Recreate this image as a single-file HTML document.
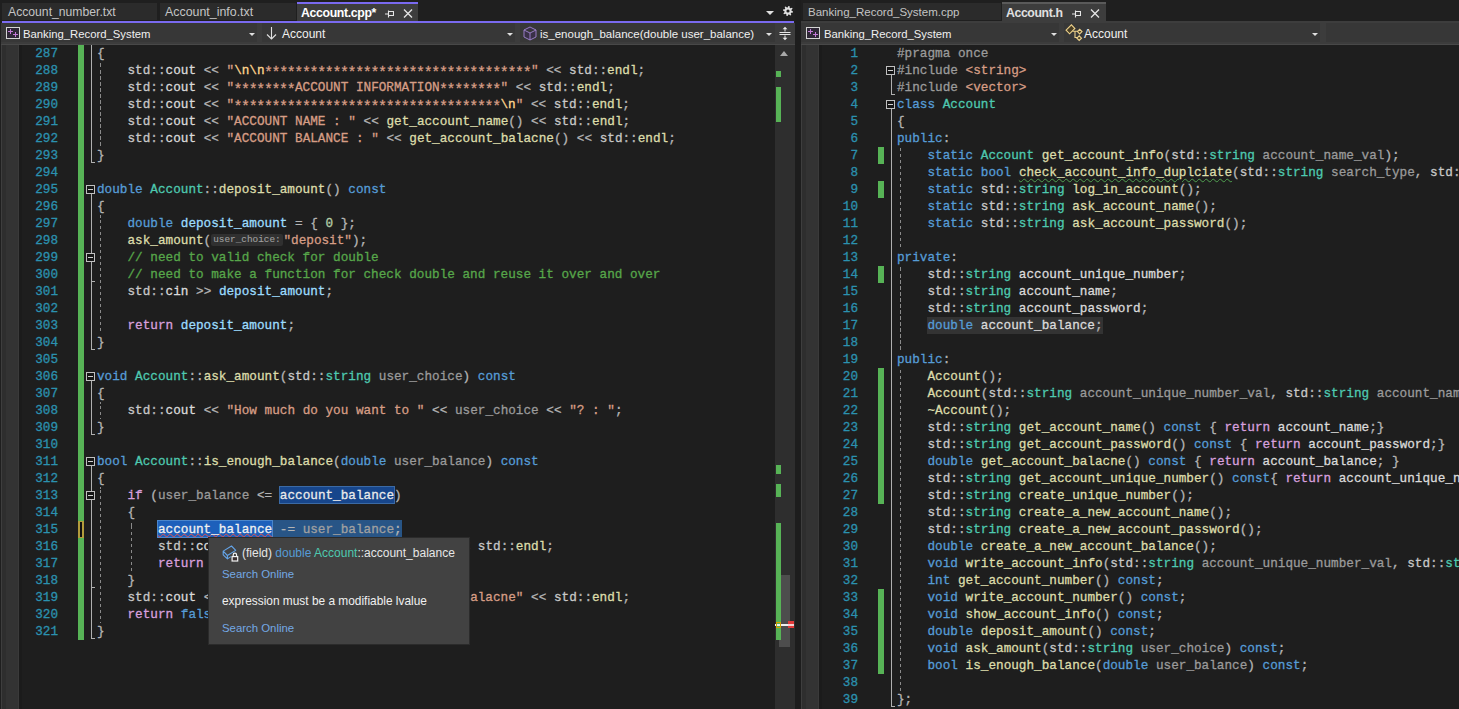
<!DOCTYPE html><html><head><meta charset="utf-8"><style>
*{margin:0;padding:0;box-sizing:border-box}
html,body{width:1459px;height:709px;overflow:hidden;background:#1f1f1f}
body{position:relative;font-family:"Liberation Sans",sans-serif}
.a{position:absolute}
.ln{position:absolute;height:17px;line-height:17px;white-space:pre;font-family:"Liberation Mono",monospace;font-size:12.7px;color:#dcdcdc;-webkit-text-stroke:0.3px currentColor}
.num{position:absolute;width:60px;text-align:right;height:17px;line-height:17px;font-family:"Liberation Mono",monospace;font-size:12.7px;color:#2b91af;-webkit-text-stroke:0.3px currentColor}
.k{color:#569cd6}.r{color:#d8a0df}.t{color:#4ec9b0}.f{color:#dcdcaa}.v{color:#9cdcfe}
.p{color:#9a9a9a}.m{color:#dadada}.n{color:#c8c8c8}.o{color:#b4b4b4}.s{color:#d69d85}
.e{color:#ffd68f}.c{color:#57a64a}.d{color:#b5cea8}.pp{color:#9b9b9b}.inc{color:#d69d85}
.hint{display:inline-block;vertical-align:top;margin-top:2px;height:12px;line-height:12px;width:72.2px;background:#303030;color:#a0a0a0;font-size:9.4px;border-radius:2px;padding-left:2px;overflow:hidden;-webkit-text-stroke:0.1px currentColor}
.sel1{color:#eaeaea}
.sel2{color:#f0f0f0;text-decoration:underline wavy #e05050;text-decoration-thickness:1px;text-underline-offset:0px}
.sel3{}.sel3o{color:#b4b4b4}.sel3p{color:#a0a0a0}
.ref{}.refk{color:#569cd6}.refm{color:#dadada}.refo{color:#b4b4b4}
.sq{color:#dcdcaa;text-decoration:underline wavy #4fa04f;text-decoration-thickness:1px;text-underline-offset:2px}
.ast{display:inline-block;width:7.6212px;text-align:center;font-size:15px;line-height:17px;vertical-align:top;position:relative;top:3px;left:-0.7px}
.tab{position:absolute;height:18px;font-size:12px;color:#c4c4c4;white-space:pre;line-height:18px}
.ui{position:absolute;font-size:12px;color:#f0f0f0;white-space:pre;line-height:14px}
.tri{position:absolute;width:0;height:0;border-left:3.5px solid transparent;border-right:3.5px solid transparent;border-top:3.5px solid #e0e0e0}
.green{position:absolute;background:#57b356;width:6px}
.guide2{background-image:repeating-linear-gradient(to bottom,#8a8a8a 0,#8a8a8a 3.5px,transparent 3.5px,transparent 6px)}
.ol{position:absolute;background:#b0b0b0;width:1px}
.box{position:absolute;width:9px;height:9px;border:1px solid #a5a5a5;background:#1e1e1e}
.box:after{content:"";position:absolute;left:1px;top:3px;width:5px;height:1px;background:#c8c8c8}
</style></head><body>
<div class="a" style="left:2px;top:3px;width:155px;height:17px;background:#2b2b2b"></div>
<div class="tab" style="left:8px;top:3px;font-size:12.2px">Account_number.txt</div>
<div class="a" style="left:160px;top:3px;width:136px;height:17px;background:#2b2b2b"></div>
<div class="tab" style="left:165px;top:3px;font-size:12.4px">Account_info.txt</div>
<div class="a" style="left:297px;top:2px;width:121px;height:19px;background:#3d3d3d;border-top:2px solid #7a6af0"></div>
<div class="tab" style="left:301px;top:3.5px;font-weight:bold;color:#ffffff;font-size:12.3px;letter-spacing:-0.35px">Account.cpp*</div>
<svg class="a" style="left:385px;top:10px" width="9" height="8" viewBox="0 0 9 8"><path d="M0 4H3M3.5 0.5V7.5M3.5 1.5H8.5V5.5H3.5" stroke="#e6e6e6" fill="none" stroke-width="1.1"/></svg>
<svg class="a" style="left:403px;top:9px" width="10" height="9" viewBox="0 0 10 9"><path d="M1 0.5L9 8.5M9 0.5L1 8.5" stroke="#e6e6e6" stroke-width="1.3"/></svg>
<div class="tri" style="left:766px;top:11px;border-left-width:4px;border-right-width:4px;border-top-width:4px"></div>
<svg class="a" style="left:783px;top:6px" width="10" height="10" viewBox="0 0 10 10"><path d="M5.51,-0.17 L6.51,0.02 L6.70,1.83 L7.28,2.22 L9.02,1.70 L9.59,2.55 L8.44,3.95 L8.58,4.65 L10.17,5.51 L9.98,6.51 L8.17,6.70 L7.78,7.28 L8.30,9.02 L7.45,9.59 L6.05,8.44 L5.35,8.58 L4.49,10.17 L3.49,9.98 L3.30,8.17 L2.72,7.78 L0.98,8.30 L0.41,7.45 L1.56,6.05 L1.42,5.35 L-0.17,4.49 L0.02,3.49 L1.83,3.30 L2.22,2.72 L1.70,0.98 L2.55,0.41 L3.95,1.56 L4.65,1.42Z" fill="#e0e0e0"/><circle cx="5" cy="5" r="1.6" fill="#1f1f1f"/></svg>
<div class="a" style="left:2px;top:21px;width:792px;height:2px;background:#7a6af0"></div>
<div class="a" style="left:1px;top:23px;width:794px;height:22px;background:#3c3c3c"></div>
<div class="a" style="left:1px;top:23px;width:256px;height:19px;background:#373737"></div>
<div class="a" style="left:262px;top:23px;width:253px;height:19px;background:#373737"></div>
<div class="a" style="left:520px;top:23px;width:255px;height:19px;background:#373737"></div>
<div class="a" style="left:1px;top:44px;width:794px;height:1px;background:#484848"></div>
<svg class="a" style="left:6px;top:27px" width="14" height="12" viewBox="0 0 14 12" shape-rendering="crispEdges"><rect x="0.5" y="0.5" width="13" height="11" fill="#2e2736" stroke="#d4d4d4"/><path d="M2 4.5H7M4.5 2V7M7 7.5H12M9.5 5V10" stroke="#c279d6" stroke-width="1"/></svg>
<div class="ui" style="left:23px;top:26.5px;font-size:11.3px">Banking_Record_System</div>
<div class="tri" style="left:249px;top:33px"></div>
<svg class="a" style="left:266px;top:27px" width="11" height="13" viewBox="0 0 11 13"><path d="M5.5 0V12M1 7.5L5.5 12L10 7.5" stroke="#e0e0e0" fill="none" stroke-width="1.1"/></svg>
<div class="ui" style="left:282px;top:26.5px">Account</div>
<div class="tri" style="left:507px;top:33px"></div>
<svg class="a" style="left:523px;top:26px" width="14" height="15" viewBox="0 0 14 15"><path d="M7 1L13 4V11L7 14L1 11V4Z M1 4L7 7L13 4 M7 7V14" stroke="#a384d4" fill="#3a3048" stroke-width="0.9"/></svg>
<div class="ui" style="left:540px;top:26.5px;font-size:11.5px">is_enough_balance(double user_balance)</div>
<div class="tri" style="left:766px;top:33px"></div>
<svg class="a" style="left:779px;top:26px" width="12" height="15" viewBox="0 0 12 15"><path d="M0.5 6.5H11.5M0.5 8.5H11.5M6 2.5V5.5M6 9.5V12.5" stroke="#e8e8e8" fill="none" stroke-width="1"/><path d="M6 0.8L3.6 3.2H8.4Z M6 14.2L3.6 11.8H8.4Z" fill="#e8e8e8"/></svg>
<div class="a" style="left:1px;top:45px;width:18px;height:664px;background:#333333"></div><div class="a" style="left:1px;top:45px;width:1px;height:664px;background:#3e3e3e"></div><div class="a" style="left:2px;top:45px;width:4px;height:664px;background:#2e2e2e"></div><div class="a" style="left:18px;top:45px;width:1px;height:664px;background:#3a3a3a"></div><div class="a" style="left:19px;top:45px;width:3px;height:664px;background:#1b1b1b"></div>
<div class="a" style="left:22px;top:45px;width:753px;height:664px;background:#1e1e1e"></div>
<div class="num" style="top:45px;left:-2px">287</div>
<div class="num" style="top:62px;left:-2px">288</div>
<div class="num" style="top:79px;left:-2px">289</div>
<div class="num" style="top:96px;left:-2px">290</div>
<div class="num" style="top:113px;left:-2px">291</div>
<div class="num" style="top:130px;left:-2px">292</div>
<div class="num" style="top:147px;left:-2px">293</div>
<div class="num" style="top:164px;left:-2px">294</div>
<div class="num" style="top:181px;left:-2px">295</div>
<div class="num" style="top:198px;left:-2px">296</div>
<div class="num" style="top:215px;left:-2px">297</div>
<div class="num" style="top:232px;left:-2px">298</div>
<div class="num" style="top:249px;left:-2px">299</div>
<div class="num" style="top:266px;left:-2px">300</div>
<div class="num" style="top:283px;left:-2px">301</div>
<div class="num" style="top:300px;left:-2px">302</div>
<div class="num" style="top:317px;left:-2px">303</div>
<div class="num" style="top:334px;left:-2px">304</div>
<div class="num" style="top:351px;left:-2px">305</div>
<div class="num" style="top:368px;left:-2px">306</div>
<div class="num" style="top:385px;left:-2px">307</div>
<div class="num" style="top:402px;left:-2px">308</div>
<div class="num" style="top:419px;left:-2px">309</div>
<div class="num" style="top:436px;left:-2px">310</div>
<div class="num" style="top:453px;left:-2px">311</div>
<div class="num" style="top:470px;left:-2px">312</div>
<div class="num" style="top:487px;left:-2px">313</div>
<div class="num" style="top:504px;left:-2px">314</div>
<div class="num" style="top:521px;left:-2px">315</div>
<div class="num" style="top:538px;left:-2px">316</div>
<div class="num" style="top:555px;left:-2px">317</div>
<div class="num" style="top:572px;left:-2px">318</div>
<div class="num" style="top:589px;left:-2px">319</div>
<div class="num" style="top:606px;left:-2px">320</div>
<div class="num" style="top:623px;left:-2px">321</div>
<div class="green" style="left:78px;top:45px;height:595px"></div>
<div class="a" style="left:78px;top:521px;width:6px;height:17px;background:#121212;border:1px solid #b39c3c;border-left-width:2px;border-right-width:2px"></div>
<div class="ol" style="left:91px;top:45px;height:118px"></div>
<div class="ol" style="left:91px;top:162px;width:4px;height:1px"></div>
<div class="a" style="left:86px;top:185px;width:9px;height:9px;border:1px solid #c0c0c0;background:#161616"></div><div class="a" style="left:88px;top:189px;width:5px;height:1px;background:#d0d0d0"></div>
<div class="ol" style="left:91px;top:194px;height:156px"></div>
<div class="ol" style="left:91px;top:349px;width:4px;height:1px"></div>
<div class="a" style="left:86px;top:253px;width:9px;height:9px;border:1px solid #c0c0c0;background:#161616"></div><div class="a" style="left:88px;top:257px;width:5px;height:1px;background:#d0d0d0"></div>
<div class="ol" style="left:91px;top:262px;height:20px"></div>
<div class="ol" style="left:91px;top:281px;width:4px;height:1px"></div>
<div class="a" style="left:86px;top:372px;width:9px;height:9px;border:1px solid #c0c0c0;background:#161616"></div><div class="a" style="left:88px;top:376px;width:5px;height:1px;background:#d0d0d0"></div>
<div class="ol" style="left:91px;top:381px;height:54px"></div>
<div class="ol" style="left:91px;top:434px;width:4px;height:1px"></div>
<div class="a" style="left:86px;top:457px;width:9px;height:9px;border:1px solid #c0c0c0;background:#161616"></div><div class="a" style="left:88px;top:461px;width:5px;height:1px;background:#d0d0d0"></div>
<div class="ol" style="left:91px;top:466px;height:173px"></div>
<div class="ol" style="left:91px;top:638px;width:4px;height:1px"></div>
<div class="a" style="left:86px;top:491px;width:9px;height:9px;border:1px solid #c0c0c0;background:#161616"></div><div class="a" style="left:88px;top:495px;width:5px;height:1px;background:#d0d0d0"></div>
<div class="ol" style="left:91px;top:500px;height:88px"></div>
<div class="ol" style="left:91px;top:587px;width:4px;height:1px"></div>
<div class="a guide2" style="left:100px;top:62px;width:1px;height:85px;background-position:0 2px"></div>
<div class="a guide2" style="left:100px;top:215px;width:1px;height:119px;background-position:0 5px"></div>
<div class="a guide2" style="left:100px;top:402px;width:1px;height:17px;background-position:0 4px"></div>
<div class="a guide2" style="left:100px;top:487px;width:1px;height:136px;background-position:0 3px"></div>
<div class="a guide2" style="left:131px;top:521px;width:1px;height:51px;background-position:0 5px"></div>
<div class="a" style="left:279px;top:486px;width:116px;height:18px;background:#17468c;border:1px solid #3b6aa5"></div>
<div class="a" style="left:273px;top:520px;width:129px;height:18px;background:#285586"></div>
<div class="a" style="left:157px;top:520px;width:116px;height:18px;background:#1d60bb;border:1px solid #4a86cc"></div>
<div class="ln" style="top:45px;left:97px"><span class="o">{</span></div>
<div class="ln" style="top:62px;left:97px">    <span class="n">std</span><span class="o">::</span><span class="m">cout</span> <span class="o">&lt;&lt;</span> <span class="s">&quot;</span><span class="e">\n\n</span><span class="s"><span class="ast">*</span><span class="ast">*</span><span class="ast">*</span><span class="ast">*</span><span class="ast">*</span><span class="ast">*</span><span class="ast">*</span><span class="ast">*</span><span class="ast">*</span><span class="ast">*</span><span class="ast">*</span><span class="ast">*</span><span class="ast">*</span><span class="ast">*</span><span class="ast">*</span><span class="ast">*</span><span class="ast">*</span><span class="ast">*</span><span class="ast">*</span><span class="ast">*</span><span class="ast">*</span><span class="ast">*</span><span class="ast">*</span><span class="ast">*</span><span class="ast">*</span><span class="ast">*</span><span class="ast">*</span><span class="ast">*</span><span class="ast">*</span><span class="ast">*</span><span class="ast">*</span><span class="ast">*</span><span class="ast">*</span><span class="ast">*</span><span class="ast">*</span>&quot;</span> <span class="o">&lt;&lt;</span> <span class="n">std</span><span class="o">::</span><span class="f">endl</span><span class="o">;</span></div>
<div class="ln" style="top:79px;left:97px">    <span class="n">std</span><span class="o">::</span><span class="m">cout</span> <span class="o">&lt;&lt;</span> <span class="s">&quot;<span class="ast">*</span><span class="ast">*</span><span class="ast">*</span><span class="ast">*</span><span class="ast">*</span><span class="ast">*</span><span class="ast">*</span><span class="ast">*</span>ACCOUNT INFORMATION<span class="ast">*</span><span class="ast">*</span><span class="ast">*</span><span class="ast">*</span><span class="ast">*</span><span class="ast">*</span><span class="ast">*</span><span class="ast">*</span>&quot;</span> <span class="o">&lt;&lt;</span> <span class="n">std</span><span class="o">::</span><span class="f">endl</span><span class="o">;</span></div>
<div class="ln" style="top:96px;left:97px">    <span class="n">std</span><span class="o">::</span><span class="m">cout</span> <span class="o">&lt;&lt;</span> <span class="s">&quot;<span class="ast">*</span><span class="ast">*</span><span class="ast">*</span><span class="ast">*</span><span class="ast">*</span><span class="ast">*</span><span class="ast">*</span><span class="ast">*</span><span class="ast">*</span><span class="ast">*</span><span class="ast">*</span><span class="ast">*</span><span class="ast">*</span><span class="ast">*</span><span class="ast">*</span><span class="ast">*</span><span class="ast">*</span><span class="ast">*</span><span class="ast">*</span><span class="ast">*</span><span class="ast">*</span><span class="ast">*</span><span class="ast">*</span><span class="ast">*</span><span class="ast">*</span><span class="ast">*</span><span class="ast">*</span><span class="ast">*</span><span class="ast">*</span><span class="ast">*</span><span class="ast">*</span><span class="ast">*</span><span class="ast">*</span><span class="ast">*</span><span class="ast">*</span></span><span class="e">\n</span><span class="s">&quot;</span> <span class="o">&lt;&lt;</span> <span class="n">std</span><span class="o">::</span><span class="f">endl</span><span class="o">;</span></div>
<div class="ln" style="top:113px;left:97px">    <span class="n">std</span><span class="o">::</span><span class="m">cout</span> <span class="o">&lt;&lt;</span> <span class="s">&quot;ACCOUNT NAME : &quot;</span> <span class="o">&lt;&lt;</span> <span class="f">get_account_name</span><span class="o">()</span> <span class="o">&lt;&lt;</span> <span class="n">std</span><span class="o">::</span><span class="f">endl</span><span class="o">;</span></div>
<div class="ln" style="top:130px;left:97px">    <span class="n">std</span><span class="o">::</span><span class="m">cout</span> <span class="o">&lt;&lt;</span> <span class="s">&quot;ACCOUNT BALANCE : &quot;</span> <span class="o">&lt;&lt;</span> <span class="f">get_account_balacne</span><span class="o">()</span> <span class="o">&lt;&lt;</span> <span class="n">std</span><span class="o">::</span><span class="f">endl</span><span class="o">;</span></div>
<div class="ln" style="top:147px;left:97px"><span class="o">}</span></div>
<div class="ln" style="top:164px;left:97px"></div>
<div class="ln" style="top:181px;left:97px"><span class="k">double</span> <span class="t">Account</span><span class="o">::</span><span class="f">deposit_amount</span><span class="o">()</span> <span class="k">const</span></div>
<div class="ln" style="top:198px;left:97px"><span class="o">{</span></div>
<div class="ln" style="top:215px;left:97px">    <span class="k">double</span> <span class="v">deposit_amount</span> <span class="o">=</span> <span class="o">{</span> <span class="d">0</span> <span class="o">};</span></div>
<div class="ln" style="top:232px;left:97px">    <span class="f">ask_amount</span><span class="o">(</span><span class="hint">user_choice:</span><span class="s">&quot;deposit&quot;</span><span class="o">);</span></div>
<div class="ln" style="top:249px;left:97px">    <span class="c">// need to valid check for double</span></div>
<div class="ln" style="top:266px;left:97px">    <span class="c">// need to make a function for check double and reuse it over and over</span></div>
<div class="ln" style="top:283px;left:97px">    <span class="n">std</span><span class="o">::</span><span class="m">cin</span> <span class="o">&gt;&gt;</span> <span class="v">deposit_amount</span><span class="o">;</span></div>
<div class="ln" style="top:300px;left:97px"></div>
<div class="ln" style="top:317px;left:97px">    <span class="r">return</span> <span class="v">deposit_amount</span><span class="o">;</span></div>
<div class="ln" style="top:334px;left:97px"><span class="o">}</span></div>
<div class="ln" style="top:351px;left:97px"></div>
<div class="ln" style="top:368px;left:97px"><span class="k">void</span> <span class="t">Account</span><span class="o">::</span><span class="f">ask_amount</span><span class="o">(</span><span class="n">std</span><span class="o">::</span><span class="t">string</span> <span class="p">user_choice</span><span class="o">)</span> <span class="k">const</span></div>
<div class="ln" style="top:385px;left:97px"><span class="o">{</span></div>
<div class="ln" style="top:402px;left:97px">    <span class="n">std</span><span class="o">::</span><span class="m">cout</span> <span class="o">&lt;&lt;</span> <span class="s">&quot;How much do you want to &quot;</span> <span class="o">&lt;&lt;</span> <span class="p">user_choice</span> <span class="o">&lt;&lt;</span> <span class="s">&quot;? : &quot;</span><span class="o">;</span></div>
<div class="ln" style="top:419px;left:97px"><span class="o">}</span></div>
<div class="ln" style="top:436px;left:97px"></div>
<div class="ln" style="top:453px;left:97px"><span class="k">bool</span> <span class="t">Account</span><span class="o">::</span><span class="f">is_enough_balance</span><span class="o">(</span><span class="k">double</span> <span class="p">user_balance</span><span class="o">)</span> <span class="k">const</span></div>
<div class="ln" style="top:470px;left:97px"><span class="o">{</span></div>
<div class="ln" style="top:487px;left:97px">    <span class="r">if</span> <span class="o">(</span><span class="p">user_balance</span> <span class="o">&lt;=</span> <span class="sel1">account_balance</span><span class="o">)</span></div>
<div class="ln" style="top:504px;left:97px">    <span class="o">{</span></div>
<div class="ln" style="top:521px;left:97px">        <span class="sel2">account_balance</span><span class="sel3"> </span><span class="sel3o">-=</span><span class="sel3"> </span><span class="sel3p">user_balance</span><span class="sel3o">;</span></div>
<div class="ln" style="top:538px;left:97px">        <span class="n">std</span><span class="o">::</span><span class="m">cout</span> <span class="o">&lt;&lt;</span> <span class="s">&quot;balance is enough now!!&quot;</span> <span class="o">&lt;&lt;</span> <span class="n">std</span><span class="o">::</span><span class="f">endl</span><span class="o">;</span></div>
<div class="ln" style="top:555px;left:97px">        <span class="r">return</span> <span class="k">true</span><span class="o">;</span></div>
<div class="ln" style="top:572px;left:97px">    <span class="o">}</span></div>
<div class="ln" style="top:589px;left:97px">    <span class="n">std</span><span class="o">::</span><span class="m">cout</span> <span class="o">&lt;&lt;</span> <span class="s">&quot;You don&#x27;t have enough account balacne&quot;</span> <span class="o">&lt;&lt;</span> <span class="n">std</span><span class="o">::</span><span class="f">endl</span><span class="o">;</span></div>
<div class="ln" style="top:606px;left:97px">    <span class="r">return</span> <span class="k">false</span><span class="o">;</span></div>
<div class="ln" style="top:623px;left:97px"><span class="o">}</span></div>
<div class="a" style="left:775px;top:45px;width:20px;height:664px;background:#2e2e2e"></div>
<div class="tri" style="left:780px;top:51px;border-left:4.5px solid transparent;border-right:4.5px solid transparent;border-top:0;border-bottom:5px solid #a8a8a8"></div>
<div class="a" style="left:779px;top:575px;width:11px;height:72px;background:#4d4d4d"></div>
<div class="a" style="left:776px;top:71px;width:5px;height:6px;background:#57b356"></div>
<div class="a" style="left:776px;top:87px;width:5px;height:35px;background:#57b356"></div>
<div class="a" style="left:776px;top:465px;width:5px;height:9px;background:#57b356"></div>
<div class="a" style="left:776px;top:484px;width:5px;height:13px;background:#57b356"></div>
<div class="a" style="left:776px;top:523px;width:5px;height:117px;background:#57b356"></div>
<div class="a" style="left:775px;top:624px;width:19px;height:2px;background:#f0f0f0"></div>
<div class="a" style="left:776px;top:622px;width:5px;height:6px;border:1px solid #d0a000"></div>
<div class="a" style="left:788px;top:621px;width:6px;height:7px;background:#e03a3a"></div>
<div class="a" style="left:788px;top:624px;width:6px;height:2px;background:#f4d0d0"></div>
<div class="a" style="left:795px;top:0px;width:6px;height:709px;background:#1d1d1d"></div>
<div class="a" style="left:803px;top:3px;width:198px;height:17px;background:#2b2b2b"></div>
<div class="tab" style="left:808px;top:3px;font-size:11.5px">Banking_Record_System.cpp</div>
<div class="a" style="left:1002px;top:2px;width:104px;height:21px;background:#3d3d3d;border-top:2px solid #5a5a5a"></div>
<div class="tab" style="left:1006px;top:3.5px;font-weight:bold;color:#e0e0e0;font-size:12.3px;letter-spacing:-0.4px">Account.h</div>
<svg class="a" style="left:1072px;top:10px" width="9" height="8" viewBox="0 0 9 8"><path d="M0 4H3M3.5 0.5V7.5M3.5 1.5H8.5V5.5H3.5" stroke="#e6e6e6" fill="none" stroke-width="1.1"/></svg>
<svg class="a" style="left:1090px;top:9px" width="10" height="9" viewBox="0 0 10 9"><path d="M1 0.5L9 8.5M9 0.5L1 8.5" stroke="#e6e6e6" stroke-width="1.3"/></svg>
<div class="a" style="left:801px;top:21px;width:658px;height:2px;background:#3d3d3d"></div>
<div class="a" style="left:801px;top:23px;width:658px;height:22px;background:#3c3c3c"></div>
<div class="a" style="left:801px;top:23px;width:258px;height:19px;background:#373737"></div>
<div class="a" style="left:1064px;top:23px;width:256px;height:19px;background:#373737"></div>
<div class="a" style="left:1326px;top:23px;width:133px;height:19px;background:#373737"></div>
<div class="a" style="left:801px;top:44px;width:658px;height:1px;background:#484848"></div>
<svg class="a" style="left:806px;top:27px" width="14" height="12" viewBox="0 0 14 12" shape-rendering="crispEdges"><rect x="0.5" y="0.5" width="13" height="11" fill="#2e2736" stroke="#d4d4d4"/><path d="M2 4.5H7M4.5 2V7M7 7.5H12M9.5 5V10" stroke="#c279d6" stroke-width="1"/></svg>
<div class="ui" style="left:824px;top:26.5px;font-size:11.3px">Banking_Record_System</div>
<div class="tri" style="left:1051px;top:33px"></div>
<svg class="a" style="left:1065px;top:24px" width="18" height="18" viewBox="0 0 18 18"><g stroke="#ecd08a" fill="#4a3f25" stroke-width="1.1"><path d="M1.1 6.2L6.4 0.9L9.9 4.5L4.6 9.8Z"/><path d="M12.4 7.6L14.7 5.3L17 7.6L14.7 9.9Z"/><path d="M11.9 14.2L14.2 11.9L16.5 14.2L14.2 16.5Z"/><path d="M7.5 7.2H13.2M10 7.2V13.5H12.5" fill="none"/></g></svg>
<div class="ui" style="left:1084px;top:26.5px">Account</div>
<div class="tri" style="left:1312px;top:33px"></div>
<div class="a" style="left:801px;top:45px;width:18px;height:664px;background:#333333"></div><div class="a" style="left:801px;top:45px;width:1px;height:664px;background:#3e3e3e"></div><div class="a" style="left:802px;top:45px;width:4px;height:664px;background:#2e2e2e"></div><div class="a" style="left:818px;top:45px;width:1px;height:664px;background:#3a3a3a"></div><div class="a" style="left:819px;top:45px;width:3px;height:664px;background:#1b1b1b"></div>
<div class="a" style="left:822px;top:45px;width:637px;height:664px;background:#1e1e1e"></div>
<div class="num" style="top:45px;left:798px">1</div>
<div class="num" style="top:62px;left:798px">2</div>
<div class="num" style="top:79px;left:798px">3</div>
<div class="num" style="top:96px;left:798px">4</div>
<div class="num" style="top:113px;left:798px">5</div>
<div class="num" style="top:130px;left:798px">6</div>
<div class="num" style="top:147px;left:798px">7</div>
<div class="num" style="top:164px;left:798px">8</div>
<div class="num" style="top:181px;left:798px">9</div>
<div class="num" style="top:198px;left:798px">10</div>
<div class="num" style="top:215px;left:798px">11</div>
<div class="num" style="top:232px;left:798px">12</div>
<div class="num" style="top:249px;left:798px">13</div>
<div class="num" style="top:266px;left:798px">14</div>
<div class="num" style="top:283px;left:798px">15</div>
<div class="num" style="top:300px;left:798px">16</div>
<div class="num" style="top:317px;left:798px">17</div>
<div class="num" style="top:334px;left:798px">18</div>
<div class="num" style="top:351px;left:798px">19</div>
<div class="num" style="top:368px;left:798px">20</div>
<div class="num" style="top:385px;left:798px">21</div>
<div class="num" style="top:402px;left:798px">22</div>
<div class="num" style="top:419px;left:798px">23</div>
<div class="num" style="top:436px;left:798px">24</div>
<div class="num" style="top:453px;left:798px">25</div>
<div class="num" style="top:470px;left:798px">26</div>
<div class="num" style="top:487px;left:798px">27</div>
<div class="num" style="top:504px;left:798px">28</div>
<div class="num" style="top:521px;left:798px">29</div>
<div class="num" style="top:538px;left:798px">30</div>
<div class="num" style="top:555px;left:798px">31</div>
<div class="num" style="top:572px;left:798px">32</div>
<div class="num" style="top:589px;left:798px">33</div>
<div class="num" style="top:606px;left:798px">34</div>
<div class="num" style="top:623px;left:798px">35</div>
<div class="num" style="top:640px;left:798px">36</div>
<div class="num" style="top:657px;left:798px">37</div>
<div class="num" style="top:674px;left:798px">38</div>
<div class="num" style="top:691px;left:798px">39</div>
<div class="green" style="left:878px;top:147px;height:17px"></div>
<div class="green" style="left:878px;top:181px;height:17px"></div>
<div class="green" style="left:878px;top:266px;height:17px"></div>
<div class="green" style="left:878px;top:368px;height:136px"></div>
<div class="green" style="left:878px;top:589px;height:85px"></div>
<div class="a" style="left:886px;top:66px;width:9px;height:9px;border:1px solid #c0c0c0;background:#161616"></div><div class="a" style="left:888px;top:70px;width:5px;height:1px;background:#d0d0d0"></div>
<div class="ol" style="left:891px;top:75px;height:20px"></div>
<div class="ol" style="left:891px;top:94px;width:4px;height:1px"></div>
<div class="a" style="left:886px;top:100px;width:9px;height:9px;border:1px solid #c0c0c0;background:#161616"></div><div class="a" style="left:888px;top:104px;width:5px;height:1px;background:#d0d0d0"></div>
<div class="ol" style="left:891px;top:109px;height:598px"></div>
<div class="ol" style="left:891px;top:706px;width:4px;height:1px"></div>
<div class="a guide2" style="left:900px;top:147px;width:1px;height:102px;background-position:0 1px"></div>
<div class="a guide2" style="left:900px;top:266px;width:1px;height:85px;background-position:0 2px"></div>
<div class="a guide2" style="left:900px;top:368px;width:1px;height:323px;background-position:0 2px"></div>
<div class="a" style="left:927px;top:317px;width:176px;height:17px;background:#333333"></div>
<div class="ln" style="top:45px;left:897px"><span class="pp">#pragma once</span></div>
<div class="ln" style="top:62px;left:897px"><span class="pp">#include</span> <span class="inc">&lt;string&gt;</span></div>
<div class="ln" style="top:79px;left:897px"><span class="pp">#include</span> <span class="inc">&lt;vector&gt;</span></div>
<div class="ln" style="top:96px;left:897px"><span class="k">class</span> <span class="t">Account</span></div>
<div class="ln" style="top:113px;left:897px"><span class="o">{</span></div>
<div class="ln" style="top:130px;left:897px"><span class="k">public</span><span class="o">:</span></div>
<div class="ln" style="top:147px;left:897px">    <span class="k">static</span> <span class="t">Account</span> <span class="f">get_account_info</span><span class="o">(</span><span class="n">std</span><span class="o">::</span><span class="t">string</span> <span class="p">account_name_val</span><span class="o">);</span></div>
<div class="ln" style="top:164px;left:897px">    <span class="k">static</span> <span class="k">bool</span> <span class="sq">check_account_info_duplciate</span><span class="o">(</span><span class="n">std</span><span class="o">::</span><span class="t">string</span> <span class="p">search_type</span><span class="o">,</span> <span class="n">std</span><span class="o">::</span><span class="t">string</span> <span class="p">search_value</span><span class="o">);</span></div>
<div class="ln" style="top:181px;left:897px">    <span class="k">static</span> <span class="n">std</span><span class="o">::</span><span class="t">string</span> <span class="f">log_in_account</span><span class="o">();</span></div>
<div class="ln" style="top:198px;left:897px">    <span class="k">static</span> <span class="n">std</span><span class="o">::</span><span class="t">string</span> <span class="f">ask_account_name</span><span class="o">();</span></div>
<div class="ln" style="top:215px;left:897px">    <span class="k">static</span> <span class="n">std</span><span class="o">::</span><span class="t">string</span> <span class="f">ask_account_password</span><span class="o">();</span></div>
<div class="ln" style="top:232px;left:897px"></div>
<div class="ln" style="top:249px;left:897px"><span class="k">private</span><span class="o">:</span></div>
<div class="ln" style="top:266px;left:897px">    <span class="n">std</span><span class="o">::</span><span class="t">string</span> <span class="m">account_unique_number</span><span class="o">;</span></div>
<div class="ln" style="top:283px;left:897px">    <span class="n">std</span><span class="o">::</span><span class="t">string</span> <span class="m">account_name</span><span class="o">;</span></div>
<div class="ln" style="top:300px;left:897px">    <span class="n">std</span><span class="o">::</span><span class="t">string</span> <span class="m">account_password</span><span class="o">;</span></div>
<div class="ln" style="top:317px;left:897px">    <span class="refk">double</span><span class="ref"> </span><span class="refm">account_balance</span><span class="refo">;</span></div>
<div class="ln" style="top:334px;left:897px"></div>
<div class="ln" style="top:351px;left:897px"><span class="k">public</span><span class="o">:</span></div>
<div class="ln" style="top:368px;left:897px">    <span class="f">Account</span><span class="o">();</span></div>
<div class="ln" style="top:385px;left:897px">    <span class="f">Account</span><span class="o">(</span><span class="n">std</span><span class="o">::</span><span class="t">string</span> <span class="p">account_unique_number_val</span><span class="o">,</span> <span class="n">std</span><span class="o">::</span><span class="t">string</span> <span class="p">account_name_val</span><span class="o">);</span></div>
<div class="ln" style="top:402px;left:897px">    <span class="f">~Account</span><span class="o">();</span></div>
<div class="ln" style="top:419px;left:897px">    <span class="n">std</span><span class="o">::</span><span class="t">string</span> <span class="f">get_account_name</span><span class="o">()</span> <span class="k">const</span> <span class="o">{</span> <span class="r">return</span> <span class="m">account_name</span><span class="o">;}</span></div>
<div class="ln" style="top:436px;left:897px">    <span class="n">std</span><span class="o">::</span><span class="t">string</span> <span class="f">get_account_password</span><span class="o">()</span> <span class="k">const</span> <span class="o">{</span> <span class="r">return</span> <span class="m">account_password</span><span class="o">;}</span></div>
<div class="ln" style="top:453px;left:897px">    <span class="k">double</span> <span class="f">get_account_balacne</span><span class="o">()</span> <span class="k">const</span> <span class="o">{</span> <span class="r">return</span> <span class="m">account_balance</span><span class="o">; }</span></div>
<div class="ln" style="top:470px;left:897px">    <span class="n">std</span><span class="o">::</span><span class="t">string</span> <span class="f">get_account_unique_number</span><span class="o">()</span> <span class="k">const</span><span class="o">{</span> <span class="r">return</span> <span class="m">account_unique_number</span><span class="o">; }</span></div>
<div class="ln" style="top:487px;left:897px">    <span class="n">std</span><span class="o">::</span><span class="t">string</span> <span class="f">create_unique_number</span><span class="o">();</span></div>
<div class="ln" style="top:504px;left:897px">    <span class="n">std</span><span class="o">::</span><span class="t">string</span> <span class="f">create_a_new_account_name</span><span class="o">();</span></div>
<div class="ln" style="top:521px;left:897px">    <span class="n">std</span><span class="o">::</span><span class="t">string</span> <span class="f">create_a_new_account_password</span><span class="o">();</span></div>
<div class="ln" style="top:538px;left:897px">    <span class="k">double</span> <span class="f">create_a_new_account_balance</span><span class="o">();</span></div>
<div class="ln" style="top:555px;left:897px">    <span class="k">void</span> <span class="f">write_account_info</span><span class="o">(</span><span class="n">std</span><span class="o">::</span><span class="t">string</span> <span class="p">account_unique_number_val</span><span class="o">,</span> <span class="n">std</span><span class="o">::</span><span class="t">string</span> <span class="p">account_name_val</span><span class="o">);</span></div>
<div class="ln" style="top:572px;left:897px">    <span class="k">int</span> <span class="f">get_account_number</span><span class="o">()</span> <span class="k">const</span><span class="o">;</span></div>
<div class="ln" style="top:589px;left:897px">    <span class="k">void</span> <span class="f">write_account_number</span><span class="o">()</span> <span class="k">const</span><span class="o">;</span></div>
<div class="ln" style="top:606px;left:897px">    <span class="k">void</span> <span class="f">show_account_info</span><span class="o">()</span> <span class="k">const</span><span class="o">;</span></div>
<div class="ln" style="top:623px;left:897px">    <span class="k">double</span> <span class="f">deposit_amount</span><span class="o">()</span> <span class="k">const</span><span class="o">;</span></div>
<div class="ln" style="top:640px;left:897px">    <span class="k">void</span> <span class="f">ask_amount</span><span class="o">(</span><span class="n">std</span><span class="o">::</span><span class="t">string</span> <span class="p">user_choice</span><span class="o">)</span> <span class="k">const</span><span class="o">;</span></div>
<div class="ln" style="top:657px;left:897px">    <span class="k">bool</span> <span class="f">is_enough_balance</span><span class="o">(</span><span class="k">double</span> <span class="p">user_balance</span><span class="o">)</span> <span class="k">const</span><span class="o">;</span></div>
<div class="ln" style="top:674px;left:897px"></div>
<div class="ln" style="top:691px;left:897px"><span class="o">};</span></div>
<div class="a" style="left:208px;top:537px;width:262px;height:108px;background:#2b2b2b"></div><div class="a" style="left:209px;top:538px;width:260px;height:106px;background:#424242"></div><svg class="a" style="left:222px;top:545px" width="17" height="17" viewBox="0 0 17 17"><path d="M1.2 6.1L9.5 1L13.7 5.4L5.4 10.5Z M1.2 6.1V9.8L5.4 13.9V10.5 M5.4 13.9L9 11.6" stroke="#64a4e8" fill="none" stroke-width="1.1" stroke-linejoin="round"/><path d="M11.2 11.4V9.9A1.7 1.7 0 0 1 14.6 9.9V11.4" stroke="#f2f2f2" fill="none" stroke-width="1.2"/><rect x="10.1" y="11.6" width="5.6" height="4.4" fill="#3a3030" stroke="#f2f2f2" stroke-width="1.2"/></svg><div class="ui" style="left:242px;top:546px;color:#e6e6e6">(field) <span style="color:#569cd6">double</span> <span style="color:#4ec9b0">Account</span>::account_balance</div><div class="ui" style="left:222px;top:567px;color:#74a9e5;font-size:11.4px">Search Online</div><div class="ui" style="left:222px;top:594px;color:#f0f0f0;font-size:11.9px">expression must be a modifiable lvalue</div><div class="ui" style="left:222px;top:621px;color:#74a9e5;font-size:11.4px">Search Online</div>
</body></html>
